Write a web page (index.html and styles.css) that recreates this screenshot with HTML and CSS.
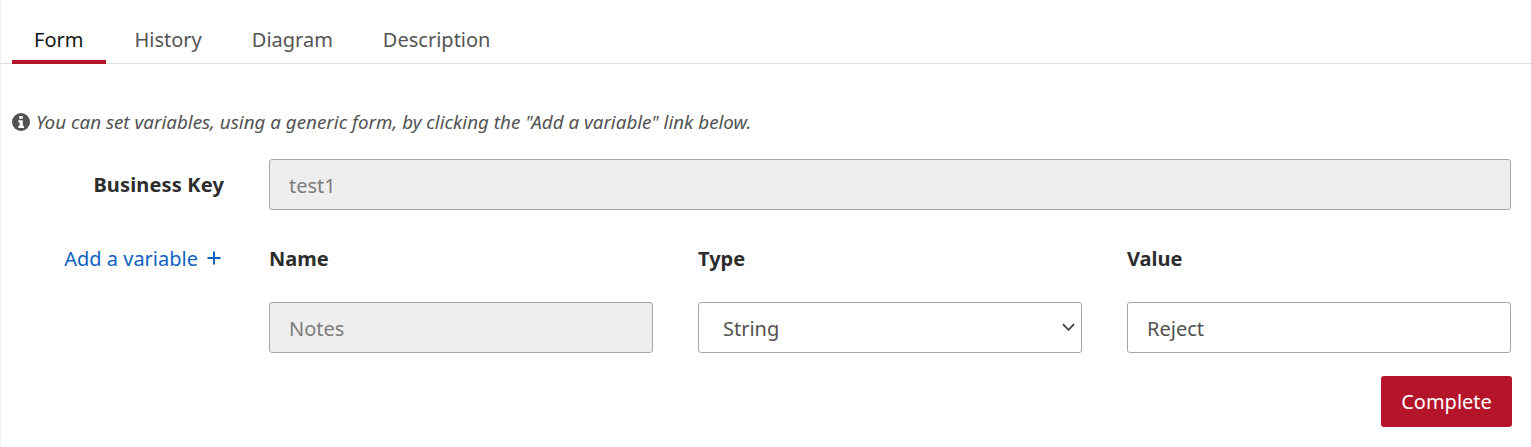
FILE: index.html

```html
<!DOCTYPE html>
<html lang="en">
<head>
    <meta charset="UTF-8">
    <meta name="viewport" content="width=device-width, initial-scale=1.0">
    <title>Task Form</title>
    <link rel="stylesheet" href="styles.css">
</head>
<body>
    <div class="tabs">
        <a class="tab active">Form</a>
        <a class="tab">History</a>
        <a class="tab">Diagram</a>
        <a class="tab">Description</a>
    </div>

    <form class="task-form">
        <p class="hint">
            <svg class="hint-icon" viewBox="0 0 20 20" width="18" height="18">
                <circle cx="10" cy="10" r="10" fill="#525252"/>
                <rect x="8" y="3.2" width="4" height="3.2" rx="0.6" fill="#fff"/>
                <path d="M7 8h5v6.2h1.4v2.4H7v-2.4h1.4v-3.8H7z" fill="#fff"/>
            </svg>
            <span>You can set variables, using a generic form, by clicking the "Add a variable" link below.</span>
        </p>

        <div class="row key-row">
            <label class="side-label">Business Key</label>
            <input class="field" type="text" value="test1" disabled>
        </div>

        <div class="row head-row">
            <div class="side-link">
                <a class="add-link">Add a variable</a>
                <svg viewBox="0 0 14 14" width="14" height="14">
                    <path d="M7 0.5v13M0.5 7h13" stroke="#0f62c0" stroke-width="2" fill="none"/>
                </svg>
            </div>
            <div class="columns">
                <span class="col-title">Name</span>
                <span class="col-title">Type</span>
                <span class="col-title">Value</span>
            </div>
        </div>

        <div class="row var-row">
            <div class="side-empty"></div>
            <div class="columns">
                <input class="field" type="text" value="Notes" disabled>
                <div class="select-wrap">
                    <select class="field select">
                        <option>String</option>
                    </select>
                    <svg class="chevron" viewBox="0 0 14 8" width="13" height="8">
                        <path d="M1 1l6 6 6-6" stroke="#444" stroke-width="2" fill="none"/>
                    </svg>
                </div>
                <input class="field" type="text" value="Reject">
            </div>
        </div>

        <div class="actions">
            <button type="button" class="complete">Complete</button>
        </div>
    </form>
</body>
</html>
```

FILE: styles.css

```css
body, html {
    height: 100%;
    margin: 0;
    overflow: hidden;
}

body {
    font-family: "Noto Sans", "Liberation Sans", sans-serif;
    font-size: 20px;
    color: #2d2d2d;
    background-color: #fff;
    border-left: 1px solid #f0f0f0;
    box-sizing: border-box;
}

.tabs {
    display: flex;
    gap: 6px;
    height: 63px;
    padding-left: 11px;
    border-bottom: 1px solid #dedede;
}

.tab {
    box-sizing: border-box;
    height: 64px;
    padding: 28px 22px 0;
    line-height: 24px;
    color: #555;
}

.tab.active {
    padding-right: 23px;
    color: #161616;
    border-bottom: 4px solid #b5152b;
}

.task-form {
    padding: 0 20px 0 11px;
}

.hint {
    display: flex;
    align-items: center;
    gap: 6px;
    margin: 0;
    padding-top: 46px;
    line-height: 24px;
    font-size: 18.8px;
    font-style: italic;
    color: #525252;
}

.row {
    display: flex;
}

.key-row {
    align-items: center;
    margin-top: 25px;
}

.side-label {
    width: 212px;
    margin-right: 45px;
    text-align: right;
    font-weight: bold;
    letter-spacing: 0.15px;
    flex-shrink: 0;
}

.field {
    flex: 1;
    width: 100%;
    min-width: 0;
    box-sizing: border-box;
    height: 51px;
    padding: 2px 19px 0;
    border: 1px solid #a8a8a8;
    border-radius: 3px;
    background-color: #fff;
    font-family: inherit;
    font-size: 20px;
    color: #525252;
}

.field:disabled {
    background-color: #eee;
    color: #7c7c7c;
}

.head-row {
    align-items: center;
    margin-top: 35px;
    height: 26px;
}

.side-link {
    display: flex;
    align-items: center;
    justify-content: flex-end;
    gap: 9px;
    width: 209px;
    margin-right: 48px;
    flex-shrink: 0;
}

.add-link {
    color: #0f62c0;
}

.side-empty {
    width: 257px;
    flex-shrink: 0;
}

.columns {
    flex: 1;
    display: grid;
    grid-template-columns: repeat(3, 1fr);
    column-gap: 45px;
}

.col-title {
    font-weight: bold;
}

.var-row {
    margin-top: 31px;
}

.select-wrap {
    position: relative;
}

.select {
    appearance: none;
    -webkit-appearance: none;
    padding-left: 24px;
}

.chevron {
    position: absolute;
    right: 7px;
    top: 21px;
}

.actions {
    display: flex;
    justify-content: flex-end;
    margin: 23px -1px 0 0;
}

.complete {
    width: 131px;
    height: 51px;
    border: none;
    border-radius: 3px;
    background-color: #b5152b;
    color: #fff;
    font-family: inherit;
    font-size: 20px;
}
```
